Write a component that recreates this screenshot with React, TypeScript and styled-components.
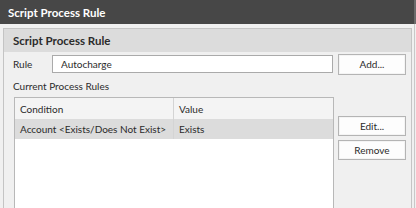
import React from "react";
import styled, { createGlobalStyle } from "styled-components";

const GlobalStyle = createGlobalStyle`
	html, body {
		margin: 0;
		padding: 0;
		background: #f0f0f0;
		font-family: Lato, "Liberation Sans", sans-serif;
		font-size: 10px;
		color: #2b2b2b;
	}
`;

const Page = styled.div`
	width: 416px;
	height: 208px;
	overflow: hidden;
	display: flex;
	flex-direction: column;
`;

const TitleBar = styled.div`
	height: 24px;
	flex-shrink: 0;
	background: #474747;
	color: #fff;
	font-weight: bold;
	font-size: 11.5px;
	display: flex;
	align-items: center;
	padding-left: 8px;
	box-shadow: inset -2px 0 0 #6a6a6a;
`;

const Content = styled.div`
	flex: 1;
	padding: 4px 2px 0 3px;
	border-right: 1px solid #c8c8c8;
	margin-right: 1px;
	display: flex;
	flex-direction: column;
	min-height: 0;
`;

const Panel = styled.div`
	flex: 1;
	border: 1px solid #c4c4c4;
	border-bottom: 0;
	display: flex;
	flex-direction: column;
	min-height: 0;
`;

const PanelHeader = styled.div`
	height: 23px;
	background: #dcdcdc;
	font-weight: bold;
	font-size: 11.5px;
	display: flex;
	align-items: center;
	padding-left: 9px;
`;

const PanelBody = styled.div`
	padding: 1px 3px 0 9px;
	display: flex;
	flex-direction: column;
	flex: 1;
	min-height: 0;
`;

const FieldRow = styled.div`
	display: flex;
	align-items: center;
	height: 22px;
`;

const Label = styled.span`
	width: 39px;
`;

const TextInput = styled.input`
	box-sizing: border-box;
	width: 281px;
	height: 18px;
	border: 1px solid #aaa;
	background: #fff;
	font: inherit;
	color: #2b2b2b;
	padding: 0 8px;
	margin-right: 5px;
	outline: none;
`;

const Button = styled.button<{ $h?: number }>`
	box-sizing: border-box;
	width: 68px;
	height: ${(p) => p.$h ?? 20}px;
	border: 1px solid #b4b4b4;
	background: #fdfdfd;
	box-shadow: inset 0 0 0 1px #f4f4f4;
	font: inherit;
	color: #2b2b2b;
	padding: 0;
	cursor: pointer;
`;

const SectionLabel = styled.div`
	height: 24px;
	line-height: 24px;
	margin-top: -1px;
	margin-bottom: -1px;
`;

const ListArea = styled.div`
	display: flex;
	flex: 1;
	min-height: 0;
	padding-left: 1px;
`;

const Table = styled.div`
	box-sizing: border-box;
	width: 320px;
	border: 1px solid #b8b8b8;
	border-bottom: 0;
	background: #fff;
	flex-shrink: 0;
`;

const Row = styled.div<{ $head?: boolean; $selected?: boolean }>`
	display: grid;
	grid-template-columns: 159px 1fr;
	height: ${(p) => (p.$head ? 21 : 20)}px;
	background: ${(p) => (p.$head ? "#f4f4f4" : p.$selected ? "#dcdcdc" : "#fff")};
`;

const Cell = styled.div<{ $first?: boolean }>`
	display: flex;
	align-items: center;
	padding-left: 5px;
	white-space: nowrap;
	overflow: hidden;
	border-right: ${(p) => (p.$first ? "1px solid #d4d4d4" : "0")};
`;

const ButtonColumn = styled.div`
	display: flex;
	flex-direction: column;
	gap: 4px;
	padding-top: 19px;
	margin-left: 4px;
`;

export default function App() {
	return (
		<Page>
			<GlobalStyle />
			<TitleBar>Script Process Rule</TitleBar>
			<Content>
				<Panel>
					<PanelHeader>Script Process Rule</PanelHeader>
					<PanelBody>
						<FieldRow>
							<Label>Rule</Label>
							<TextInput defaultValue="Autocharge" />
							<Button $h={21}>Add...</Button>
						</FieldRow>
						<SectionLabel>Current Process Rules</SectionLabel>
						<ListArea>
							<Table>
								<Row $head>
									<Cell $first>Condition</Cell>
									<Cell>Value</Cell>
								</Row>
								<Row $selected>
									<Cell $first>Account &lt;Exists/Does Not Exist&gt;</Cell>
									<Cell>Exists</Cell>
								</Row>
							</Table>
							<ButtonColumn>
								<Button>Edit...</Button>
								<Button>Remove</Button>
							</ButtonColumn>
						</ListArea>
					</PanelBody>
				</Panel>
			</Content>
		</Page>
	);
}
